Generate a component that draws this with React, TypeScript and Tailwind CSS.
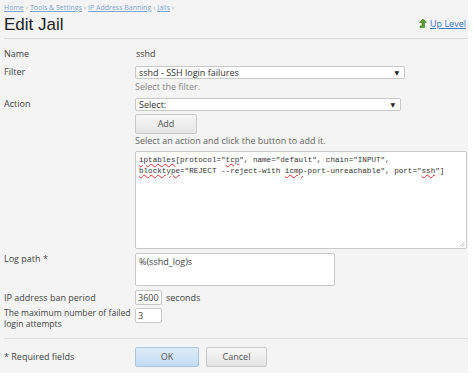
import React from 'react'

const crumbs = ['Home', 'Tools & Settings', 'IP Address Banning', 'Jails']

function Select({ value, width }: { value: string; width: string }) {
  return (
    <div className={`flex h-[13px] items-center justify-between rounded-[2px] border border-[#c9c9c9] bg-white pl-[3px] pr-[5px] ${width}`}>
      <span className="text-[9px] leading-none text-[#333]">{value}</span>
      <span className="text-[6px] leading-none text-[#222]">▼</span>
    </div>
  )
}

function Row({ label, children, className = '' }: { label: React.ReactNode; children: React.ReactNode; className?: string }) {
  return (
    <div className={`flex ${className}`}>
      <div className="w-[131px] shrink-0 text-[9px] leading-[11px] text-[#444]">{label}</div>
      <div className="flex-1">{children}</div>
    </div>
  )
}

const spell = 'underline decoration-wavy decoration-[#e03030]'

export default function App() {
  return (
    <div className="h-[377px] w-[474px] bg-white" style={{ fontFamily: '"Open Sans", "DejaVu Sans", sans-serif' }}>
      <div className="h-[373px] w-[468px] bg-[#f4f4f4] pl-[4px]">
        {/* header */}
        <div className="flex items-end justify-between border-b border-[#dcdcdc] pr-[2px] pb-[3px] pt-[3px]">
          <div>
            <div className="flex items-center gap-[2px] text-[7px] leading-[9px] text-[#7fa5cf]">
              {crumbs.map((c) => (
                <React.Fragment key={c}>
                  <span className="underline">{c}</span>
                  <span className="text-[#999]">›</span>
                </React.Fragment>
              ))}
            </div>
            <div className="mt-[3px] text-[17px] leading-[20px] text-[#222]" style={{ fontFamily: '"Liberation Sans", Arial, sans-serif' }}>
              Edit Jail
            </div>
          </div>
          <div className="mb-[7px] flex items-center gap-[3px]">
            <svg width="9" height="10" viewBox="0 0 9 10">
              <path d="M5 1 L8.5 4.5 L6.5 4.5 L6.5 9.5 L2 9.5 L2 8 L4 8 L4 4.5 L1.5 4.5 Z" fill="#5aa02c" stroke="#3d7a18" strokeWidth="0.6" />
            </svg>
            <span className="text-[9px] leading-none text-[#3a74c4] underline">Up Level</span>
          </div>
        </div>

        <div className="pt-[9px]">
          <Row label="Name">
            <div className="pl-[1px] text-[9px] leading-[11px] text-[#444]">sshd</div>
          </Row>

          <Row label="Filter" className="mt-[7px]">
            <Select value="sshd - SSH login failures" width="w-[270px]" />
            <div className="mt-[2px] text-[9px] leading-[11px] text-[#888]">Select the filter.</div>
          </Row>

          <Row label="Action" className="mt-[6px]">
            <Select value="Select:" width="w-[266px]" />
            <div className="mt-[3px] flex h-[20px] w-[62px] items-center justify-center rounded-[2px] border border-[#c8c8c8] bg-gradient-to-b from-[#f7f7f7] to-[#e4e4e4] text-[9px] text-[#555]">
              Add
            </div>
            <div className="mt-[1px] text-[9px] leading-[11px] text-[#666]">Select an action and click the button to add it.</div>
            <div
              className="relative mt-[5px] h-[98px] w-[332px] rounded-[2px] border border-[#c9c9c9] bg-white px-[3px] pt-[3px] text-[7.6px] leading-[11px] text-[#333]"
              style={{ fontFamily: '"Liberation Mono", "Courier New", monospace' }}
            >
              <div>
                <span className={spell}>iptables</span>[protocol="<span className={spell}>tcp</span>", name="default", chain="INPUT",
              </div>
              <div className="whitespace-nowrap">
                <span className={spell}>blocktype</span>="REJECT --reject-with <span className={spell}>icmp</span>-port-unreachable", port="<span className={spell}>ssh</span>"]
              </div>
              <svg className="absolute bottom-[1px] right-[1px]" width="6" height="6" viewBox="0 0 6 6">
                <path d="M5.5 1 L1 5.5 M5.5 3.5 L3.5 5.5" stroke="#999" strokeWidth="0.7" />
              </svg>
            </div>
          </Row>

          <Row label="Log path *" className="mt-[4px]">
            <div className="h-[33px] w-[200px] rounded-[2px] border border-[#c9c9c9] bg-white px-[3px] pt-[2px] text-[9px] leading-[11px] text-[#444]">
              %(sshd_log)s
            </div>
          </Row>

          <Row label={<div className="pt-[2px]">IP address ban period</div>} className="mt-[4px]">
            <div className="flex items-center gap-[4px]">
              <div className="flex h-[15px] w-[27px] items-center rounded-[2px] border border-[#c9c9c9] bg-white px-[2px] text-[9px] text-[#444]">3600</div>
              <span className="text-[9px] text-[#444]">seconds</span>
            </div>
          </Row>

          <Row
            label={
              <div className="whitespace-nowrap text-[8.6px]">
                The maximum number of failed
                <br />
                login attempts
              </div>
            }
            className="mt-[3px]"
          >
            <div className="flex h-[15px] w-[27px] items-center rounded-[2px] border border-[#c9c9c9] bg-white px-[2px] text-[9px] text-[#444]">3</div>
          </Row>
        </div>

        <div className="mt-[8px] flex items-center border-t border-[#dedede] pt-[8px]">
          <div className="w-[131px] text-[9px] text-[#444]">* Required fields</div>
          <div className="flex gap-[7px]">
            <div className="flex h-[20px] w-[64px] items-center justify-center rounded-[2px] border border-[#a9c6e0] bg-gradient-to-b from-[#dcebf8] to-[#c4dcf1] text-[9px] text-[#555]">OK</div>
            <div className="flex h-[20px] w-[61px] items-center justify-center rounded-[2px] border border-[#c8c8c8] bg-gradient-to-b from-[#f7f7f7] to-[#e4e4e4] text-[9px] text-[#555]">Cancel</div>
          </div>
        </div>
      </div>
    </div>
  )
}
